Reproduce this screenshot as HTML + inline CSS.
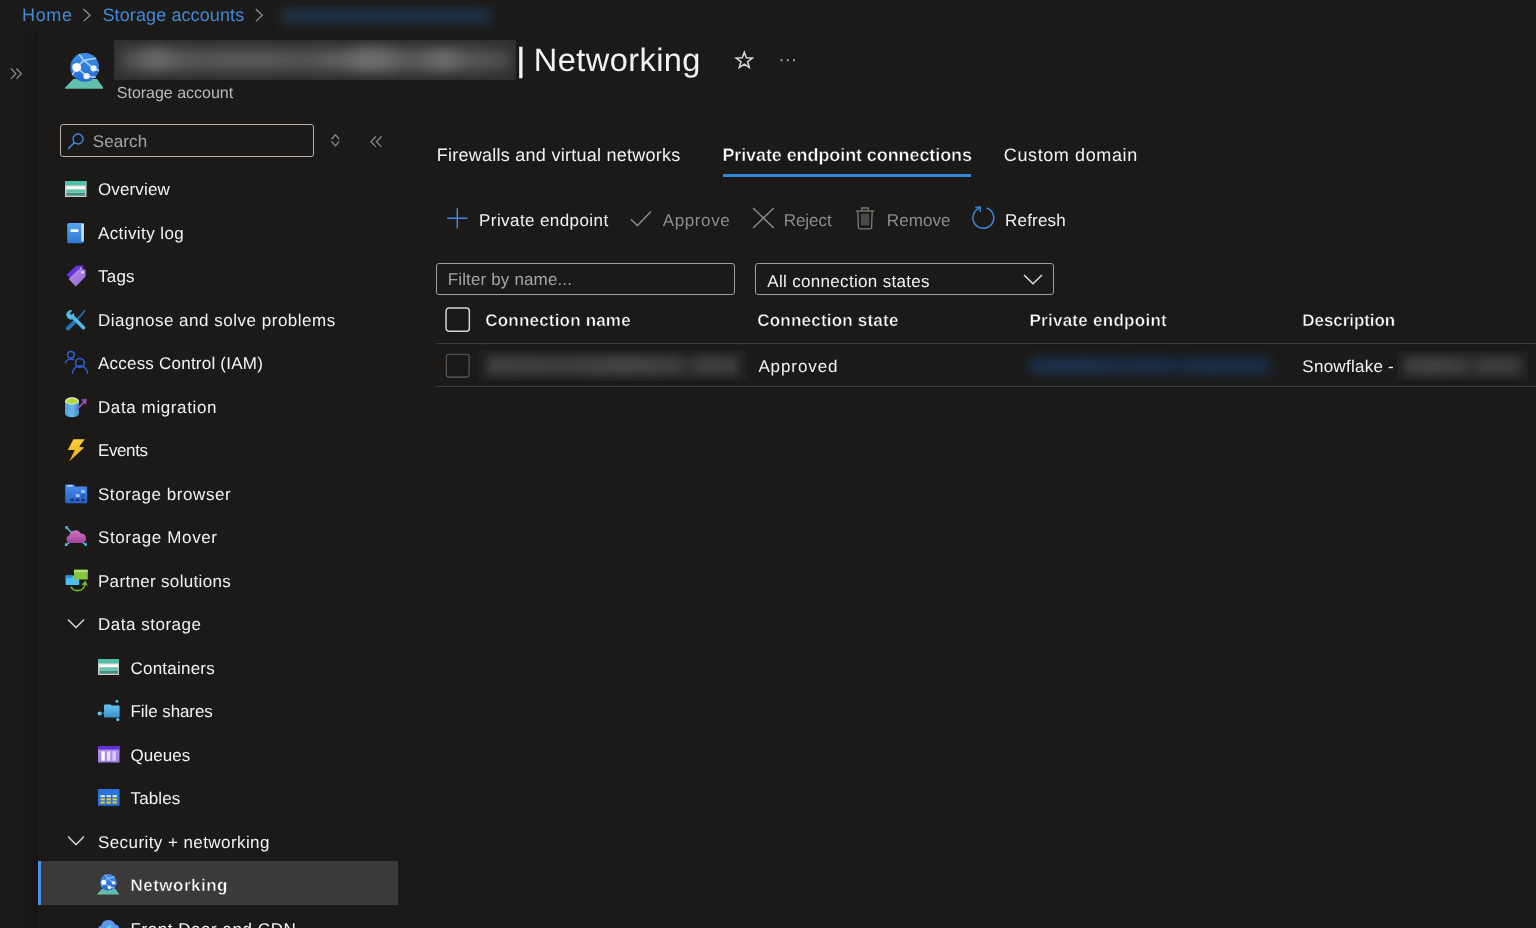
<!DOCTYPE html>
<html lang="en"><head><meta charset="utf-8"><title>Networking - Microsoft Azure</title>
<style>
html,body{margin:0;padding:0;background:#1b1a19;overflow:hidden}
body{width:1536px;height:928px;position:relative;font-family:"Liberation Sans",sans-serif;}
.a{position:absolute}
.t{position:absolute;white-space:pre;line-height:1;margin:0;padding:0;text-rendering:geometricPrecision}
.txt{position:absolute;left:0;top:0;width:1536px;height:928px;will-change:transform}
.blade{position:absolute;left:38px;top:33px;width:1510px;height:910px;background:#1b1a19;box-shadow:0 0 9px 2px rgba(0,0,0,.55)}
</style></head><body>
<!-- blade + shadow -->
<div class="a" style="left:0;top:0;width:38px;height:928px;overflow:hidden"><div style="position:absolute;left:40px;top:40px;width:30px;height:920px;box-shadow:-3px 0 11px 3px rgba(0,0,0,.24)"></div></div>
<!-- breadcrumb chevrons -->
<svg class="a" style="left:80px;top:6px" width="14" height="18" viewBox="0 0 14 18"><polyline points="3.5,3 10,9.2 3.5,15.4" fill="none" stroke="#8f8d8b" stroke-width="1.3"/></svg>
<svg class="a" style="left:252px;top:6px" width="14" height="18" viewBox="0 0 14 18"><polyline points="3.8,3 10.3,9.2 3.8,15.4" fill="none" stroke="#8f8d8b" stroke-width="1.3"/></svg>
<!-- blurred breadcrumb resource name -->
<div class="a" style="left:271px;top:3.5px;width:230px;height:29px;overflow:hidden"><div style="position:absolute;left:11px;top:5px;width:208px;height:14px;background:#21364f;filter:blur(6px)"></div></div>
<!-- expand » -->
<svg class="a" style="left:9px;top:66px" width="16" height="16" viewBox="0 0 16 16"><path d="M1.9,2.5 L6.9,7.7 L1.9,12.9 M7.4,2.5 L12.4,7.7 L7.4,12.9" fill="none" stroke="#8a8886" stroke-width="1.3"/></svg>
<!-- title blurred -->
<div class="a" style="left:113.75px;top:40px;width:401.75px;height:40px;overflow:hidden;background:#302f2e"><div style="position:absolute;left:6px;top:9px;width:390px;height:22px;background:linear-gradient(90deg,#4c4b4a,#626160 9%,#555453 20%,#5b5a59 34%,#525150 47%,#6a6968 63%,#5a5958 73%,#666564 82%,#565554 92%,#4a4948);filter:blur(6px)"></div><div style="position:absolute;left:30px;top:12px;width:26px;height:14px;background:#6a6968;filter:blur(7px)"></div><div style="position:absolute;left:240px;top:12px;width:40px;height:14px;background:#706f6e;filter:blur(8px)"></div><div style="position:absolute;left:318px;top:13px;width:24px;height:13px;background:#6c6b6a;filter:blur(7px)"></div></div>
<!-- star -->
<svg class="a" style="left:734px;top:50px" width="21" height="22" viewBox="0 0 21 22"><polygon points="10.30,2.20 12.36,7.87 18.38,8.07 13.63,11.78 15.30,17.58 10.30,14.20 5.30,17.58 6.97,11.78 2.22,8.07 8.24,7.87" fill="none" stroke="#deDcda" stroke-width="1.5" stroke-linejoin="miter"/></svg>
<!-- ellipsis -->
<svg class="a" style="left:778px;top:56px" width="20" height="8" viewBox="0 0 20 8"><rect x="2.7" y="3" width="1.7" height="2.4" fill="#a19f9d"/><rect x="8.9" y="3" width="1.7" height="2.4" fill="#a19f9d"/><rect x="15.1" y="3" width="1.7" height="2.4" fill="#a19f9d"/></svg>
<!-- search box -->
<div class="a" style="left:60px;top:124px;width:254px;height:33px;border:1px solid #b3b0ad;border-radius:3px;box-sizing:border-box"></div>
<svg class="a" style="left:66px;top:131px" width="20" height="20" viewBox="0 0 20 20"><circle cx="12" cy="8" r="5" fill="none" stroke="#3f8ade" stroke-width="1.4"/><path d="M8.4,11.6 L2,18" stroke="#3f8ade" stroke-width="1.5" fill="none"/></svg>
<!-- sort icon -->
<svg class="a" style="left:329px;top:133px" width="14" height="16" viewBox="0 0 14 16"><path d="M2.4,6.2 L6.35,1.8 L10.3,6.2 M2.4,8.4 L6.35,12.8 L10.3,8.4" fill="none" stroke="#8a8886" stroke-width="1.3"/></svg>
<!-- collapse « -->
<svg class="a" style="left:369px;top:134px" width="16" height="16" viewBox="0 0 16 16"><path d="M6.9,2.5 L1.9,7.7 L6.9,12.9 M12.4,2.5 L7.4,7.7 L12.4,12.9" fill="none" stroke="#8a8886" stroke-width="1.3"/></svg>
<!-- selected row -->
<div class="a" style="left:38px;top:861.3px;width:360px;height:43.7px;background:#3b3a39"></div>
<div class="a" style="left:38px;top:861.3px;width:3px;height:43.7px;background:#4a90e8"></div>
<!-- tabs underline -->
<div class="a" style="left:723px;top:174.4px;width:248.3px;height:2.5px;background:#3584dc"></div>
<!-- filter boxes -->
<div class="a" style="left:436px;top:263px;width:299px;height:32px;border:1px solid #a19f9d;border-radius:3px;box-sizing:border-box"></div>
<div class="a" style="left:755px;top:263px;width:299px;height:32px;border:1px solid #a19f9d;border-radius:3px;box-sizing:border-box"></div>
<svg class="a" style="left:1022px;top:272px" width="22" height="14" viewBox="0 0 22 14"><polyline points="2,3 11,11.8 20,3" fill="none" stroke="#e1dfdd" stroke-width="1.5"/></svg>
<!-- table lines -->
<div class="a" style="left:436px;top:342.5px;width:1100px;height:1.3px;background:#3d3c3b"></div>
<div class="a" style="left:436px;top:386px;width:1100px;height:1.3px;background:#3d3c3b"></div>
<!-- checkboxes -->
<svg class="a" style="left:444px;top:306px" width="28" height="28" viewBox="0 0 28 28"><rect x="2.05" y="2.05" width="23.3" height="23.3" rx="3" fill="none" stroke="#d6d4d2" stroke-width="1.5"/></svg>
<svg class="a" style="left:444px;top:352px" width="28" height="28" viewBox="0 0 28 28"><rect x="2.3" y="2.3" width="22.8" height="22.8" rx="2.6" fill="none" stroke="#5e5c5a" stroke-width="1.1"/></svg>
<!-- row blurs -->
<div class="a" style="left:478px;top:350px;width:269px;height:31px;overflow:hidden;background:#201f1e"><div style="position:absolute;left:9px;top:6px;width:251px;height:19px;background:linear-gradient(90deg,#424140,#3d3c3b 30%,#464544 55%,#3e3d3c 75%,#302f2e 80%,#403f3e 86%,#3d3c3b);filter:blur(5px)"></div></div>
<div class="a" style="left:1030px;top:357.5px;width:240px;height:16px;background:linear-gradient(90deg,#1b314d,#1c3350 25%,#1a2c45 40%,#1b314d 52%,#192a41 62%,#1b314d 72%,#1a2f4a);filter:blur(5.5px)"></div>
<div class="a" style="left:1397.3px;top:350.5px;width:131px;height:30px;overflow:hidden;background:#201f1e"><div style="position:absolute;left:7px;top:6px;width:117px;height:18px;background:linear-gradient(90deg,#3f3e3d,#434241 30%,#3b3a39 52%,#302f2e 58%,#3e3d3c 66%,#3c3b3a);filter:blur(5px)"></div></div>
<!-- ICONS -->
<svg width="0" height="0" style="position:absolute"><defs>
<linearGradient id="gGlobe" x1="0" y1="0" x2="0" y2="1"><stop offset="0" stop-color="#3f8fe6"/><stop offset="1" stop-color="#2468cf"/></linearGradient>
<linearGradient id="gBook" x1="0" y1="0" x2="0" y2="1"><stop offset="0" stop-color="#58a6ee"/><stop offset="1" stop-color="#2e79d4"/></linearGradient>
<linearGradient id="gTag" x1="0" y1="0" x2="1" y2="1"><stop offset="0" stop-color="#b592ea"/><stop offset="1" stop-color="#9467d8"/></linearGradient>
<linearGradient id="gBolt" x1="0" y1="0" x2="0" y2="1"><stop offset="0" stop-color="#fad23c"/><stop offset="1" stop-color="#f0a31e"/></linearGradient>
<linearGradient id="gFolder" x1="0" y1="0" x2="0" y2="1"><stop offset="0" stop-color="#4a8eec"/><stop offset="1" stop-color="#2a62c8"/></linearGradient>
<linearGradient id="gCloud" x1="0" y1="0" x2="0" y2="1"><stop offset="0" stop-color="#cf72c4"/><stop offset="1" stop-color="#a0459a"/></linearGradient>
<linearGradient id="gCyl" x1="0" y1="0" x2="1" y2="0"><stop offset="0" stop-color="#4d9fd6"/><stop offset=".5" stop-color="#6db6e6"/><stop offset="1" stop-color="#3f8cc6"/></linearGradient>
<linearGradient id="gFs" x1="0" y1="0" x2="0" y2="1"><stop offset="0" stop-color="#66c8f4"/><stop offset="1" stop-color="#3a8fc8"/></linearGradient>
<linearGradient id="gQ" x1="0" y1="0" x2="0" y2="1"><stop offset="0" stop-color="#b798f0"/><stop offset="1" stop-color="#a07ce6"/></linearGradient>
<g id="icContainer"><rect x="0" y="0" width="21.5" height="16.3" rx="0.8" fill="#cfcdcb"/><rect x="0" y="0" width="21.5" height="4.3" fill="#4fc0ae"/><rect x="1.4" y="5.4" width="18.7" height="2.6" fill="#fbfbfb"/><rect x="1.4" y="8.6" width="18.7" height="3" fill="#62c4b5"/><rect x="1.4" y="11.9" width="18.7" height="2.8" fill="#3f8f84"/></g>
<g id="icGlobe"><path d="M8.3,25.9 L32,25.9 L38.3,34.6 Q38.8,35.7 37.6,35.7 L1,35.7 Q-0.2,35.7 0.3,34.6 Z" fill="#62bfac"/><circle cx="19.7" cy="14.4" r="14.4" fill="url(#gGlobe)"/><g stroke="#a9cff4" stroke-width="1.6" fill="none" stroke-linecap="round"><path d="M14.3,1.6 L18.8,7.4 L30.6,5.2"/><path d="M18.8,7.4 L11.7,14.4"/><path d="M18.8,7.4 L28.6,15.3 L33.4,17.6"/><path d="M11.7,14.4 L21.6,23.1 L30.2,24.2"/><path d="M11.7,14.4 L7.6,21.6"/></g><circle cx="11.7" cy="14.4" r="4.5" fill="#f4f5f6"/><circle cx="28.6" cy="15.3" r="3.1" fill="#eef0f2"/><circle cx="21.6" cy="23.1" r="3.2" fill="#eceef0"/></g>
</defs></svg>
<!-- header globe -->
<svg class="a" style="left:64.7px;top:53.1px" width="38.6" height="35.7" viewBox="0 0 38.6 35.7"><use href="#icGlobe"/></svg>
<!-- Overview -->
<svg class="a" style="left:65.4px;top:181px" width="21.5" height="16.3" viewBox="0 0 21.5 16.3"><use href="#icContainer"/></svg>
<!-- Activity log -->
<svg class="a" style="left:66px;top:222px" width="20" height="22" viewBox="0 0 20 22"><rect x="1.2" y="1" width="16.8" height="20.2" rx="1.8" fill="url(#gBook)"/><rect x="15.4" y="1.6" width="2.3" height="17.6" fill="#d6e8f9"/><rect x="4.6" y="7.3" width="7.8" height="2.7" rx="0.6" fill="#ffffff"/></svg>
<!-- Tags -->
<svg class="a" style="left:65px;top:264px" width="22" height="24" viewBox="0 0 22 24"><path d="M1.5,10.8 L11.2,1.8 L18.2,1.6 L18.6,8.2 L8.8,17.5 Z" fill="#6a36d8"/><path d="M3.6,15 L13.4,5.6 L20.4,5.6 L20.6,12.4 L10.8,22.4 Z" fill="url(#gTag)"/><circle cx="17.6" cy="8.2" r="1.3" fill="#e9defa"/><circle cx="15.6" cy="4.4" r="0.9" fill="#e9defa"/></svg>
<!-- Diagnose -->
<svg class="a" style="left:65px;top:308.5px" width="22" height="22" viewBox="0 0 22 22"><path d="M19.6,1.6 L17,5.2 L8.2,14.6" stroke="#1f78c0" stroke-width="1.6" fill="none" stroke-linecap="round"/><path d="M9.6,13 L3,19.4" stroke="#1f78c0" stroke-width="4" fill="none" stroke-linecap="round"/><path d="M6.5,6.5 L18.5,18.8" stroke="#52b9ea" stroke-width="3.6" fill="none" stroke-linecap="round"/><path d="M8.6,2 A4.6,4.6 0 1 0 8.9,9.4 L6.2,6.8 L5,4.4 Z" fill="#52b9ea"/><circle cx="5.6" cy="5.6" r="3.6" fill="#52b9ea"/><path d="M5.2,5.2 L8.6,0.9 L10.8,3.6 Z" fill="#1b1a19"/><path d="M5.8,5.2 L8.6,1.9" stroke="#1b1a19" stroke-width="2.6"/></svg>
<!-- IAM -->
<svg class="a" style="left:63.5px;top:349.3px" width="26" height="26" viewBox="0 0 26 26"><g fill="none" stroke="#2d62d6" stroke-width="1.5" stroke-linecap="round"><circle cx="6.9" cy="5.8" r="3.3"/><path d="M1.4,13.6 A6,6 0 0 1 9.6,10.6"/><circle cx="15.9" cy="13.8" r="4.4"/><path d="M8.6,24.2 A7.4,7.4 0 0 1 23.4,24.2"/></g></svg>
<!-- Data migration -->
<svg class="a" style="left:64px;top:395.5px" width="24" height="23" viewBox="0 0 24 23"><path d="M1,5 L1,17.6 A7,3.6 0 0 0 15,17.6 L15,5 Z" fill="url(#gCyl)"/><ellipse cx="8" cy="5" rx="7" ry="3.7" fill="#e6f0d0"/><ellipse cx="8" cy="5.2" rx="5.6" ry="2.7" fill="#b5d832"/><path d="M12.6,13.8 L21,5.2" stroke="#9a4cc4" stroke-width="1.7" fill="none"/><path d="M17,3.4 L22.8,2.8 L22,8.8 Z" fill="#9a4cc4"/></svg>
<!-- Events -->
<svg class="a" style="left:66px;top:437.5px" width="20" height="25" viewBox="0 0 20 25"><polygon points="7.4,1.2 18.8,1.2 13.2,8.8 18.2,9.4 3.2,23.4 8.8,12 1.8,12" fill="url(#gBolt)"/></svg>
<!-- Storage browser -->
<svg class="a" style="left:65px;top:484px" width="22.5" height="19.6" viewBox="0 0 22.5 19.6"><path d="M0.2,1.2 Q0.2,0.4 1,0.4 L8.6,0.4 L10.6,2.4 L21.4,2.4 Q22.2,2.4 22.2,3.2 L22.2,18.4 Q22.2,19.2 21.4,19.2 L1,19.2 Q0.2,19.2 0.2,18.4 Z" fill="url(#gFolder)"/><rect x="2.2" y="1.3" width="5.6" height="1.2" rx="0.6" fill="#d5e6fb"/><rect x="5.6" y="14.6" width="3.6" height="2.7" fill="#16367f"/><rect x="10.9" y="14.6" width="3.6" height="2.7" fill="#16367f"/><rect x="16.2" y="14.6" width="3.6" height="2.7" fill="#16367f"/><rect x="10.9" y="10.2" width="3.6" height="2.9" fill="#a9c9f5"/><rect x="16.2" y="10.2" width="3.6" height="2.9" fill="#2a5cb4"/><rect x="16.2" y="6" width="3.6" height="2.9" fill="#a9c9f5"/></svg>
<!-- Storage Mover -->
<svg class="a" style="left:64px;top:525px" width="24" height="24" viewBox="0 0 24 24"><g stroke="#49c4e6" stroke-width="1.5" fill="none"><path d="M2.6,2.6 L7.4,7.6"/><path d="M2,19.8 L6.6,16.4"/><path d="M21.8,19.6 L17.4,16.4"/></g><g fill="#49c4e6"><polygon points="1,1 4.6,1.6 1.8,4.6"/><polygon points="0.6,21.2 1.4,17.8 4,20.4"/><polygon points="23.2,21 22.4,17.6 19.8,20.2"/></g><path d="M6.2,18 A4,4 0 0 1 5.4,10.2 A6,6 0 0 1 16.6,8.6 A4.8,4.8 0 0 1 18.4,18 Z" fill="url(#gCloud)"/></svg>
<!-- Partner solutions -->
<svg class="a" style="left:64.5px;top:568.5px" width="23.5" height="24" viewBox="0 0 23.5 24"><rect x="0.6" y="6.5" width="13.6" height="9.6" rx="0.6" fill="#4cbff0"/><rect x="0.6" y="6.5" width="6.6" height="2.6" fill="#2f8fd6"/><rect x="9" y="0.8" width="13.8" height="9.6" rx="0.6" fill="#86c440"/><rect x="9" y="0.8" width="13.8" height="2.2" fill="#b4dc78"/><path d="M6,17.6 A7,6 0 0 0 19.6,15.4" stroke="#6ab832" stroke-width="1.6" fill="none"/><polygon points="16.6,15.8 20.4,11.4 22.8,16.4" fill="#6ab832"/></svg>
<!-- chevrons -->
<svg class="a" style="left:66px;top:616.5px" width="20" height="13" viewBox="0 0 20 13"><polyline points="2,2.4 10,10.6 18,2.4" fill="none" stroke="#d0cecc" stroke-width="1.5"/></svg>
<svg class="a" style="left:66px;top:833.5px" width="20" height="13" viewBox="0 0 20 13"><polyline points="2,2.4 10,10.6 18,2.4" fill="none" stroke="#d0cecc" stroke-width="1.5"/></svg>
<!-- Containers -->
<svg class="a" style="left:97.8px;top:659.2px" width="21.5" height="16.3" viewBox="0 0 21.5 16.3"><use href="#icContainer"/></svg>
<!-- File shares -->
<svg class="a" style="left:97px;top:699px" width="24" height="23" viewBox="0 0 24 23"><path d="M7,6.4 Q7,5.4 8,5.4 L13.4,5.4 L14.8,6.6 L21.6,6.6 Q22.6,6.6 22.6,7.6 L22.6,17.4 Q22.6,18.4 21.6,18.4 L8,18.4 Q7,18.4 7,17.4 Z" fill="url(#gFs)"/><circle cx="2.7" cy="14.4" r="2" fill="#5fd0f4"/><circle cx="19.9" cy="2.2" r="1.5" fill="#4cc0ea"/><circle cx="20.8" cy="20.6" r="1.7" fill="#4cc0ea"/><path d="M2.7,14.4 L7,14" stroke="#3a9cd0" stroke-width="0.8"/></svg>
<!-- Queues -->
<svg class="a" style="left:98px;top:746px" width="21.5" height="16.6" viewBox="0 0 21.5 16.6"><rect x="0" y="0" width="21.5" height="16.6" rx="0.6" fill="url(#gQ)"/><rect x="0" y="0" width="21.5" height="3.6" fill="#6232d2"/><rect x="3.4" y="5.4" width="3.4" height="9.4" fill="#fdfcff"/><rect x="8.9" y="5.4" width="3.4" height="9.4" fill="#ece3fc"/><rect x="14.4" y="5.4" width="3.4" height="9.4" fill="#dccdf8"/></svg>
<!-- Tables -->
<svg class="a" style="left:98px;top:789.3px" width="21.5" height="16.8" viewBox="0 0 21.5 16.8"><rect x="0" y="0" width="21.5" height="16.8" rx="0.6" fill="#2d74d8"/><g fill="#e9f0fb"><rect x="2.6" y="6.2" width="4.2" height="1.9"/><rect x="8.6" y="6.2" width="4.2" height="1.9"/><rect x="14.6" y="6.2" width="4.2" height="1.9"/></g><g fill="#f2d12c"><rect x="2.6" y="9.4" width="4.2" height="1.9"/><rect x="8.6" y="9.4" width="4.2" height="1.9"/><rect x="14.6" y="9.4" width="4.2" height="1.9"/><rect x="2.6" y="12.6" width="4.2" height="1.9"/><rect x="8.6" y="12.6" width="4.2" height="1.9"/><rect x="14.6" y="12.6" width="4.2" height="1.9"/></g></svg>
<!-- Networking small globe -->
<svg class="a" style="left:97.45px;top:874.2px" width="22.2" height="20.6" viewBox="0 0 38.6 35.7"><use href="#icGlobe"/></svg>
<!-- Front Door -->
<svg class="a" style="left:97px;top:917.5px" width="23" height="16" viewBox="0 0 23 16"><path d="M4.6,16 A4.4,4.4 0 0 1 4.2,7.4 A7.4,7.4 0 0 1 18.2,6.6 A4.8,4.8 0 0 1 18.8,16 Z" fill="#5b96ea"/><path d="M9.6,16 L9.6,9.6 L14,6.4 L14,16 Z" fill="#5fd8f6"/></svg>
<!-- toolbar icons -->
<svg class="a" style="left:446px;top:206.5px" width="23" height="23" viewBox="0 0 23 23"><path d="M11.3,1.2 L11.3,21.4 M1.2,11.3 L21.4,11.3" stroke="#3f8ade" stroke-width="1.5" fill="none"/></svg>
<svg class="a" style="left:629px;top:209px" width="24" height="19" viewBox="0 0 24 19"><polyline points="2,10.2 8.4,16.6 22,2.6" fill="none" stroke="#8a8886" stroke-width="1.5"/></svg>
<svg class="a" style="left:751px;top:206px" width="25" height="24" viewBox="0 0 25 24"><path d="M2,2 L22.8,22 M22.8,2 L2,22" stroke="#8a8886" stroke-width="1.5" fill="none"/></svg>
<svg class="a" style="left:855px;top:205.5px" width="20" height="24" viewBox="0 0 20 24"><g fill="none" stroke="#7c7a78" stroke-width="1.3"><path d="M0.8,5 L19.4,5"/><path d="M6.8,4.8 L6.8,2 L13.2,2 L13.2,4.8"/><path d="M2.8,5.2 L3.4,21.6 Q3.5,22.8 4.7,22.8 L15.3,22.8 Q16.5,22.8 16.6,21.6 L17.2,5.2"/></g><rect x="6" y="7.8" width="8.2" height="11.6" fill="#4a4948"/></svg>
<svg class="a" style="left:971px;top:205px" width="25" height="25" viewBox="0 0 25 25"><path d="M15.5,3.0 A10.4,10.4 0 1 1 8.4,3.3" fill="none" stroke="#3a86da" stroke-width="1.5"/><path d="M4.2,2.6 L9.2,2.1 L9.2,7" fill="none" stroke="#3a86da" stroke-width="1.5"/></svg>
<div class="txt">
<span class="t" id="bc1" style="left:22.08px;top:6.36px;font-size:18px;color:#4289d6;letter-spacing:0.627px;">Home</span>
<span class="t" id="bc2" style="left:102.49px;top:6.36px;font-size:18px;color:#4289d6;letter-spacing:0.108px;">Storage accounts</span>
<span class="t" id="tbar" style="left:516.43px;top:43.42px;font-size:33px;color:#f3f2f1;letter-spacing:0.000px;-webkit-text-stroke:0.5px #f3f2f1;">|</span>
<span class="t" id="title" style="left:533.76px;top:43.84px;font-size:32.5px;color:#f3f2f1;letter-spacing:0.458px;">Networking</span>
<span class="t" id="sub" style="left:116.85px;top:85.56px;font-size:16px;color:#bcbab8;letter-spacing:-0.019px;">Storage account</span>
<span class="t" id="srch" style="left:92.86px;top:133.46px;font-size:17px;color:#a6a4a2;letter-spacing:0.075px;">Search</span>
<span class="t" id="s1" style="left:97.95px;top:181.06px;font-size:17px;color:#f3f2f1;letter-spacing:0.147px;">Overview</span>
<span class="t" id="s2" style="left:97.95px;top:224.53px;font-size:17px;color:#f3f2f1;letter-spacing:0.415px;">Activity log</span>
<span class="t" id="s3" style="left:97.95px;top:268.00px;font-size:17px;color:#f3f2f1;letter-spacing:0.259px;">Tags</span>
<span class="t" id="s4" style="left:97.95px;top:312.47px;font-size:17px;color:#f3f2f1;letter-spacing:0.514px;">Diagnose and solve problems</span>
<span class="t" id="s5" style="left:97.95px;top:354.94px;font-size:17px;color:#f3f2f1;letter-spacing:0.226px;">Access Control (IAM)</span>
<span class="t" id="s6" style="left:97.95px;top:399.41px;font-size:17px;color:#f3f2f1;letter-spacing:0.609px;">Data migration</span>
<span class="t" id="s7" style="left:97.95px;top:441.88px;font-size:17px;color:#f3f2f1;letter-spacing:-0.378px;">Events</span>
<span class="t" id="s8" style="left:97.95px;top:486.35px;font-size:17px;color:#f3f2f1;letter-spacing:0.575px;">Storage browser</span>
<span class="t" id="s9" style="left:97.95px;top:528.82px;font-size:17px;color:#f3f2f1;letter-spacing:0.632px;">Storage Mover</span>
<span class="t" id="s10" style="left:97.95px;top:573.29px;font-size:17px;color:#f3f2f1;letter-spacing:0.328px;">Partner solutions</span>
<span class="t" id="s11" style="left:97.95px;top:615.76px;font-size:17px;color:#f3f2f1;letter-spacing:0.519px;">Data storage</span>
<span class="t" id="s12" style="left:130.55px;top:660.23px;font-size:17px;color:#f3f2f1;letter-spacing:0.212px;">Containers</span>
<span class="t" id="s13" style="left:130.55px;top:702.70px;font-size:17px;color:#f3f2f1;letter-spacing:-0.089px;">File shares</span>
<span class="t" id="s14" style="left:130.55px;top:747.17px;font-size:17px;color:#f3f2f1;letter-spacing:0.022px;">Queues</span>
<span class="t" id="s15" style="left:130.55px;top:789.64px;font-size:17px;color:#f3f2f1;letter-spacing:0.115px;">Tables</span>
<span class="t" id="s16" style="left:97.95px;top:834.11px;font-size:17px;color:#f3f2f1;letter-spacing:0.425px;">Security + networking</span>
<span class="t" id="s17" style="left:130.55px;top:876.58px;font-size:17px;color:#ffffff;letter-spacing:0.474px;font-weight:bold;-webkit-text-stroke:0.45px #3b3a39;">Networking</span>
<span class="t" id="s18" style="left:130.55px;top:921.05px;font-size:17px;color:#f3f2f1;letter-spacing:0.551px;">Front Door and CDN</span>
<span class="t" id="tab1" style="left:436.71px;top:146.36px;font-size:18px;color:#f3f2f1;letter-spacing:0.261px;">Firewalls and virtual networks</span>
<span class="t" id="tab2" style="left:722.38px;top:146.36px;font-size:18px;color:#ffffff;letter-spacing:-0.091px;font-weight:bold;-webkit-text-stroke:0.45px #1b1a19;">Private endpoint connections</span>
<span class="t" id="tab3" style="left:1003.79px;top:146.36px;font-size:18px;color:#f3f2f1;letter-spacing:0.612px;">Custom domain</span>
<span class="t" id="tb1" style="left:479.10px;top:212.46px;font-size:17px;color:#f3f2f1;letter-spacing:0.410px;">Private endpoint</span>
<span class="t" id="tb2" style="left:662.87px;top:212.46px;font-size:17px;color:#8f8d8b;letter-spacing:0.584px;">Approve</span>
<span class="t" id="tb3" style="left:783.76px;top:212.46px;font-size:17px;color:#8f8d8b;letter-spacing:-0.066px;">Reject</span>
<span class="t" id="tb4" style="left:886.82px;top:212.46px;font-size:17px;color:#8f8d8b;letter-spacing:0.060px;">Remove</span>
<span class="t" id="tb5" style="left:1005.10px;top:212.46px;font-size:17px;color:#f3f2f1;letter-spacing:0.191px;">Refresh</span>
<span class="t" id="f1" style="left:447.73px;top:270.81px;font-size:17px;color:#a6a4a2;letter-spacing:0.148px;">Filter by name...</span>
<span class="t" id="f2" style="left:767.36px;top:273.46px;font-size:17px;color:#f3f2f1;letter-spacing:0.314px;">All connection states</span>
<span class="t" id="h1" style="left:485.32px;top:311.96px;font-size:17px;color:#ffffff;letter-spacing:0.191px;font-weight:bold;-webkit-text-stroke:0.45px #1b1a19;">Connection name</span>
<span class="t" id="h2" style="left:757.27px;top:311.96px;font-size:17px;color:#ffffff;letter-spacing:0.212px;font-weight:bold;-webkit-text-stroke:0.45px #1b1a19;">Connection state</span>
<span class="t" id="h3" style="left:1029.42px;top:311.96px;font-size:17px;color:#ffffff;letter-spacing:0.276px;font-weight:bold;-webkit-text-stroke:0.45px #1b1a19;">Private endpoint</span>
<span class="t" id="h4" style="left:1302.32px;top:311.96px;font-size:17px;color:#ffffff;letter-spacing:-0.066px;font-weight:bold;-webkit-text-stroke:0.45px #1b1a19;">Description</span>
<span class="t" id="r1" style="left:758.39px;top:357.91px;font-size:17px;color:#f3f2f1;letter-spacing:0.899px;">Approved</span>
<span class="t" id="r2" style="left:1302.34px;top:357.91px;font-size:17px;color:#f3f2f1;letter-spacing:0.260px;">Snowflake -</span>
</div>
</body></html>
